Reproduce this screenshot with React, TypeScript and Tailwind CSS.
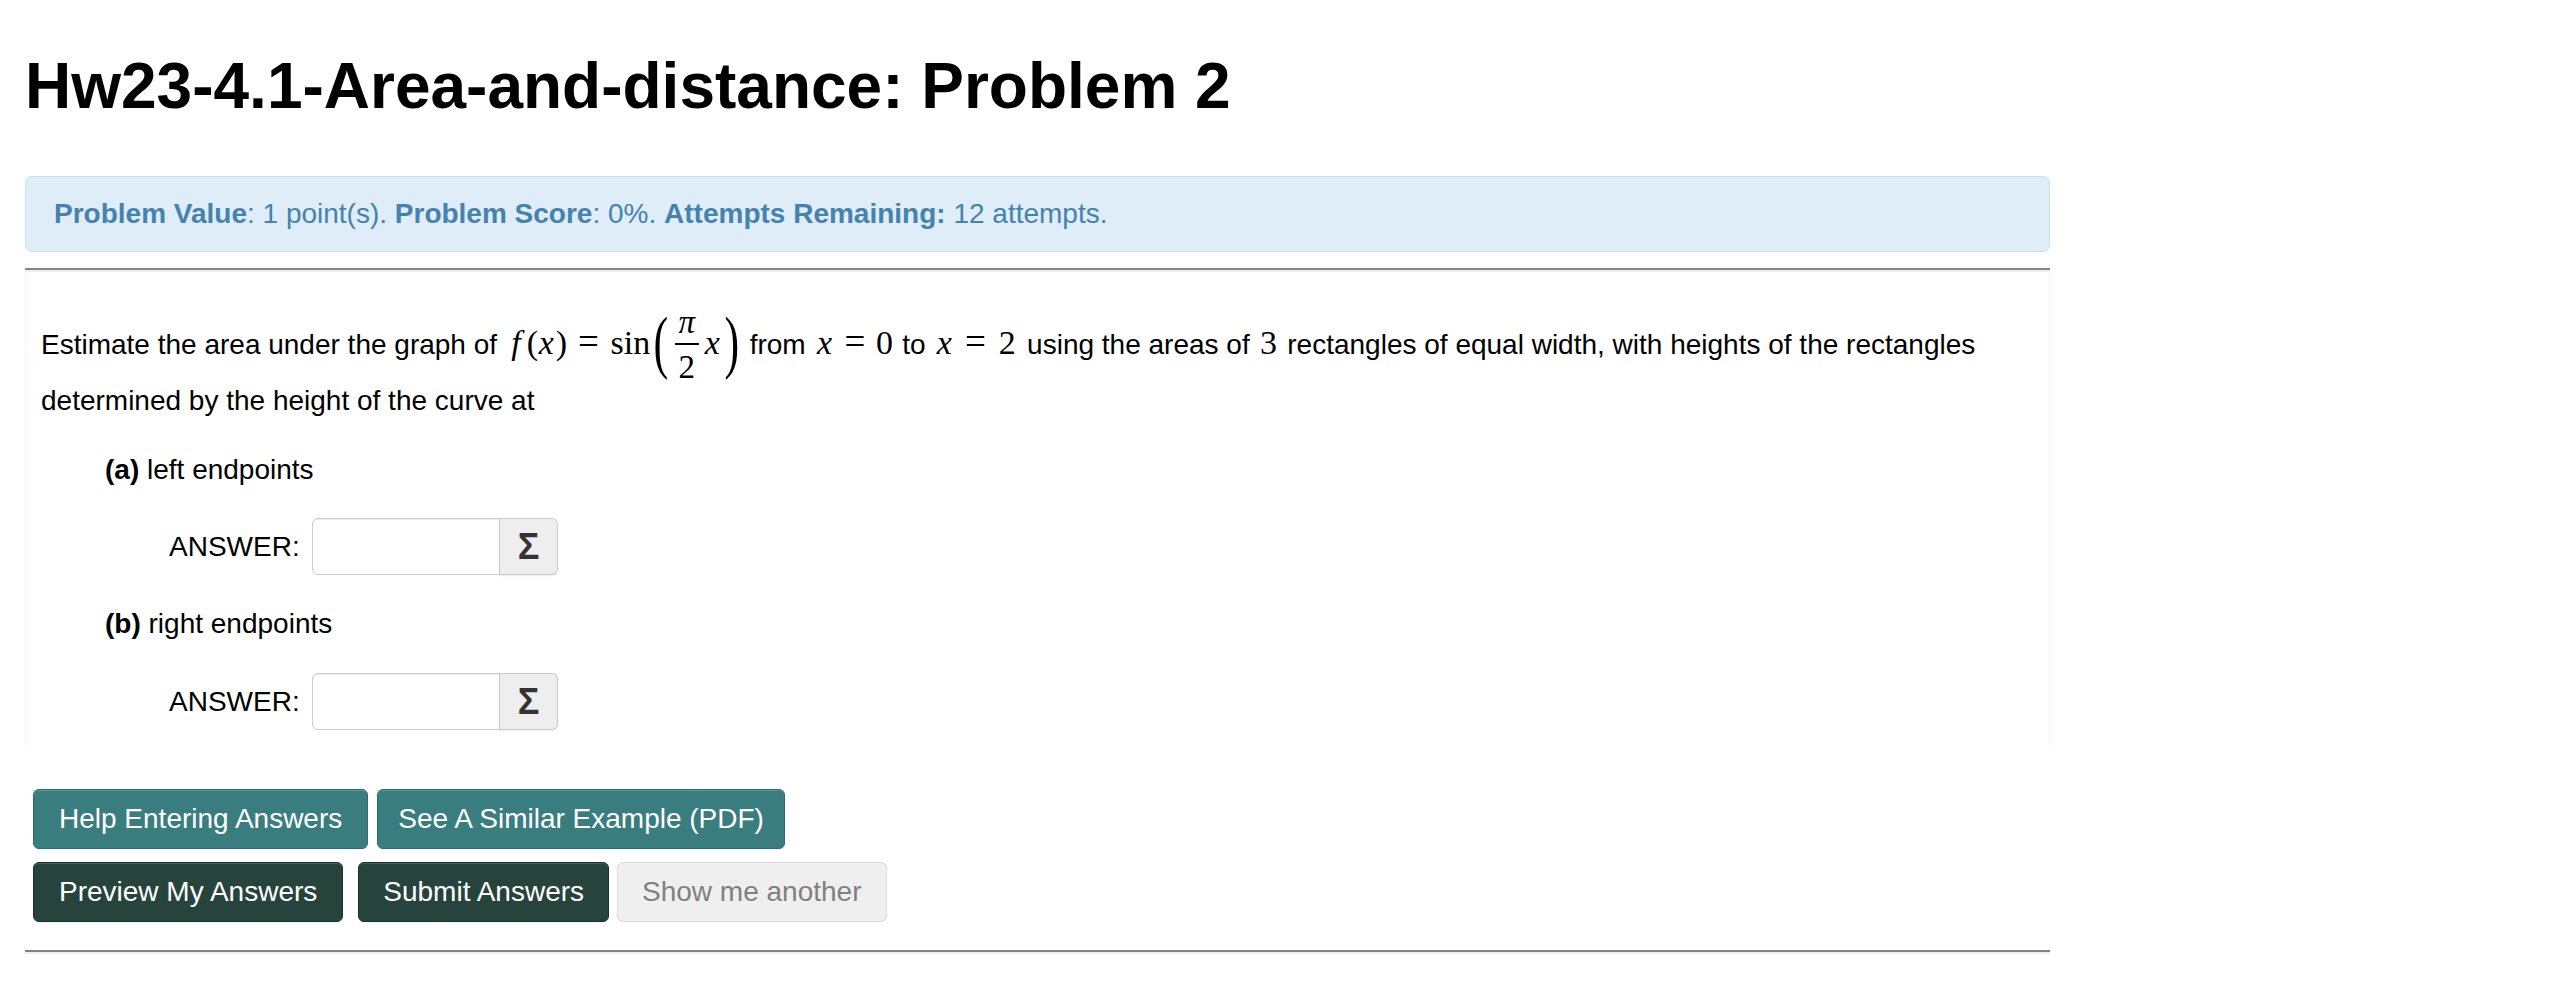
import React from "react";

const serif = "font-['Liberation_Serif','Times_New_Roman',serif]";

function Box({ w, italic, children, cls = "" }: { w: string; italic?: boolean; children: React.ReactNode; cls?: string }) {
  return (
    <span className={`inline-block text-center leading-[48px] ${w} ${serif} ${cls || "text-[34px]"} ${italic ? "italic" : ""}`}>
      {children}
    </span>
  );
}

function Paren({ ch }: { ch: string }) {
  return (
    <span className={`inline-block w-[20px] text-center ${serif} text-[44px] leading-[44px] scale-y-[1.6] align-[-3px]`}>
      {ch}
    </span>
  );
}

function Frac() {
  return (
    <span className={`inline-flex w-[32px] flex-col items-center align-[21px] -my-[12px] ${serif} text-[33px]`}>
      <span className="italic leading-[24px]">π</span>
      <span className="block h-[1.5px] w-[24px] bg-black mt-[9px]" />
      <span className="leading-[24px] mt-[10px]">2</span>
    </span>
  );
}

function AnswerRow() {
  return (
    <div className="flex items-center pl-[128px]">
      <span className="inline-block w-[143px] leading-[40px]">ANSWER:</span>
      <div className="flex h-[57px]">
        <div className="w-[188px] h-[57px] border border-[#cccccc] rounded-l-[6px] bg-white shadow-[inset_0_1px_1px_rgba(0,0,0,0.075)]" />
        <div className="w-[58px] h-[57px] border border-l-0 border-[#cccccc] rounded-r-[6px] bg-[#eeeeee] flex items-center justify-center shadow-[0_1px_2px_rgba(0,0,0,0.08)]">
          <span className="text-[36px] font-bold text-[#333333] leading-none">Σ</span>
        </div>
      </div>
    </div>
  );
}

function Hr() {
  return (
    <div>
      <div className="h-[2px] bg-[#838383]" />
      <div className="h-[2px] bg-[#eeeeee]" />
    </div>
  );
}

const base = "rounded-[6px] border py-[9px] leading-[40px] text-[28px]";
const teal = `${base} border-[#2d6a6c] bg-[#397d7f] text-white shadow-[inset_0_1px_0_rgba(255,255,255,0.2),0_1px_2px_rgba(0,0,0,0.05)]`;
const dark = `${base} border-[#1b302a] bg-[#27443c] text-white shadow-[inset_0_1px_0_rgba(255,255,255,0.15),0_1px_2px_rgba(0,0,0,0.05)]`;
const light = `${base} border-[#dadada] bg-[#efefef] text-[#808080]`;

export default function App() {
  return (
    <div className="min-h-screen bg-white text-black font-['Liberation_Sans',Arial,Helvetica,sans-serif]">
      <div className="ml-[25px] w-[2025px]">
        <h1 className="pt-[51px] text-[64px] leading-[70px] font-bold">
          Hw23-4.1-Area-and-distance: Problem 2
        </h1>

        <div className="mt-[55px] border border-[#bce8f1] bg-[#deedf7] text-[#4682ae] rounded-[7px] px-[28px] py-[17px] text-[28px] leading-[40px]">
          <b>Problem Value</b>: 1 point(s). <b>Problem Score</b>: 0%. <b>Attempts Remaining:</b> 12 attempts.
        </div>

        <div className="mt-[16px]">
          <Hr />
        </div>

        <div className="border-x border-[#f6f6f6] pt-[45px] pb-[18px] pl-[15px] text-[28px]">
          <p className="leading-[56px]">
            <span className="whitespace-nowrap">
              Estimate the area under the graph of{" "}
              <span>
                <Box w="w-[22px]" italic>f</Box>
                <Box w="w-[10px]">(</Box>
                <Box w="w-[19px]" italic>x</Box>
                <Box w="w-[11px]">)</Box>
                <Box w="w-[43px]" cls="text-[37px]">=</Box>
                <Box w="w-[41px]">sin</Box>
                <Paren ch="(" />
                <Frac />
                <Box w="w-[19px]" italic>x</Box>
                <Paren ch=")" />
              </span>{" "}
              from <Box w="w-[22px]" italic>x</Box>
              <Box w="w-[39px]" cls="text-[37px]">=</Box>
              <Box w="w-[20px]">0</Box> to <Box w="w-[22px]" italic>x</Box>
              <Box w="w-[40px]" cls="text-[37px]">=</Box>
              <Box w="w-[24px]">2</Box> using the areas of <Box w="w-[22px]">3</Box> rectangles of equal width, with heights of the rectangles
            </span>
            <br />
            determined by the height of the curve at
          </p>

          <div className="mt-[21px] pl-[64px] leading-[40px]">
            <b>(a)</b> left endpoints
          </div>
          <div className="mt-[28px]">
            <AnswerRow />
          </div>

          <div className="mt-[29px] pl-[64px] leading-[40px]">
            <b>(b)</b> right endpoints
          </div>
          <div className="mt-[29px]">
            <AnswerRow />
          </div>
        </div>

        <div className="mt-[41px] pl-[8px]">
          <div className="flex gap-[9px]">
            <button className={`${teal} px-[25px]`}>Help Entering Answers</button>
            <button className={`${teal} px-[20px]`}>See A Similar Example (PDF)</button>
          </div>
          <div className="flex mt-[13px]">
            <button className={`${dark} px-[25px]`}>Preview My Answers</button>
            <button className={`${dark} px-[24px] ml-[15px]`}>Submit Answers</button>
            <button className={`${light} px-[24px] ml-[8px]`}>Show me another</button>
          </div>
        </div>

        <div className="mt-[28px]">
          <Hr />
        </div>
      </div>
    </div>
  );
}
